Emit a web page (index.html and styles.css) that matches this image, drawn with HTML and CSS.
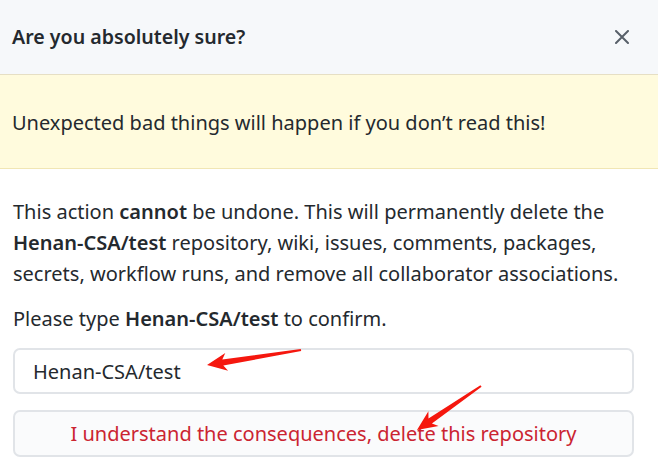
FILE: index.html
```html
<!DOCTYPE html>
<html>
<head>
<meta charset="utf-8">
<link rel="stylesheet" href="styles.css">
</head>
<body>
<div class="page">
  <div class="dialog-header">
    <h1 class="dialog-title">Are you absolutely sure?</h1>
    <button class="close-btn" aria-label="Close">
      <svg width="14" height="14" viewBox="0 0 14 14"><path d="M1 1L13 13M13 1L1 13" stroke="#586069" stroke-width="2" stroke-linecap="round"/></svg>
    </button>
  </div>
  <div class="flash-warn">Unexpected bad things will happen if you don’t read this!</div>
  <div class="dialog-body">
    <p class="desc">This action <strong>cannot</strong> be undone. This will permanently delete the <strong>Henan-CSA/test</strong> repository, wiki, issues, comments, packages, secrets, workflow runs, and remove all collaborator associations.</p>
    <p class="confirm-label">Please type <strong>Henan-CSA/test</strong> to confirm.</p>
    <div class="input-box">Henan-CSA/test</div>
    <button class="danger-btn">I understand the consequences, delete this repository</button>
  </div>
  <svg class="annotations" width="658" height="468" viewBox="0 0 658 468">
    <polygon fill="#f5170e" points="207,365 228.1,370.7 223.3,365.5 301.2,351 300.8,349 222.3,359.5 225.3,352.9"/>
    <polygon fill="#f5170e" points="417,430 438.6,426.1 431.9,423.4 481.6,386.8 480.4,385.2 428.5,418.4 428.4,411.3"/>
  </svg>
</div>
</body>
</html>
```
FILE: styles.css
```css
* { box-sizing: border-box; }
html, body { margin: 0; padding: 0; background: #fff; }
body {
  font-family: "Noto Sans", "Open Sans", sans-serif;
  color: #24292e;
  font-size: 20px;
}
.page {
  position: relative;
  width: 658px;
  height: 468px;
  overflow: hidden;
}
.dialog-header {
  height: 75px;
  background: #f6f8fa;
  display: flex;
  align-items: center;
  justify-content: space-between;
  padding: 0 29px 0 12px;
  border-bottom: 1px solid #e6dfc4;
}
.dialog-title {
  margin: 0;
  font-size: 19.6px;
  font-weight: 600;
  line-height: 26px;
}
.close-btn {
  border: 0;
  background: none;
  padding: 0;
  display: flex;
}
.flash-warn {
  height: 94px;
  background: #fffbdd;
  border-bottom: 1px solid #f1e6b4;
  display: flex;
  align-items: center;
  padding: 2px 12px 0;
  color: #24292e;
}
.dialog-body {
  padding: 27px 24px 0 13px;
}
.desc {
  margin: 0;
  line-height: 31px;
}
.confirm-label {
  margin: 15px 0 14px;
  line-height: 30px;
}
strong { font-weight: 600; }
.input-box {
  height: 46px;
  border: 2px solid #e1e4e8;
  border-radius: 7px;
  display: flex;
  align-items: center;
  padding-left: 18px;
  font-size: 20px;
}
.danger-btn {
  margin-top: 16px;
  width: 100%;
  height: 47px;
  border: 2px solid #e1e4e8;
  border-radius: 7px;
  background: #fafbfc;
  color: #cb2431;
  font-family: inherit;
  font-size: 20px;
  font-weight: 400;
}
.annotations {
  position: absolute;
  left: 0;
  top: 0;
  pointer-events: none;
}
```
